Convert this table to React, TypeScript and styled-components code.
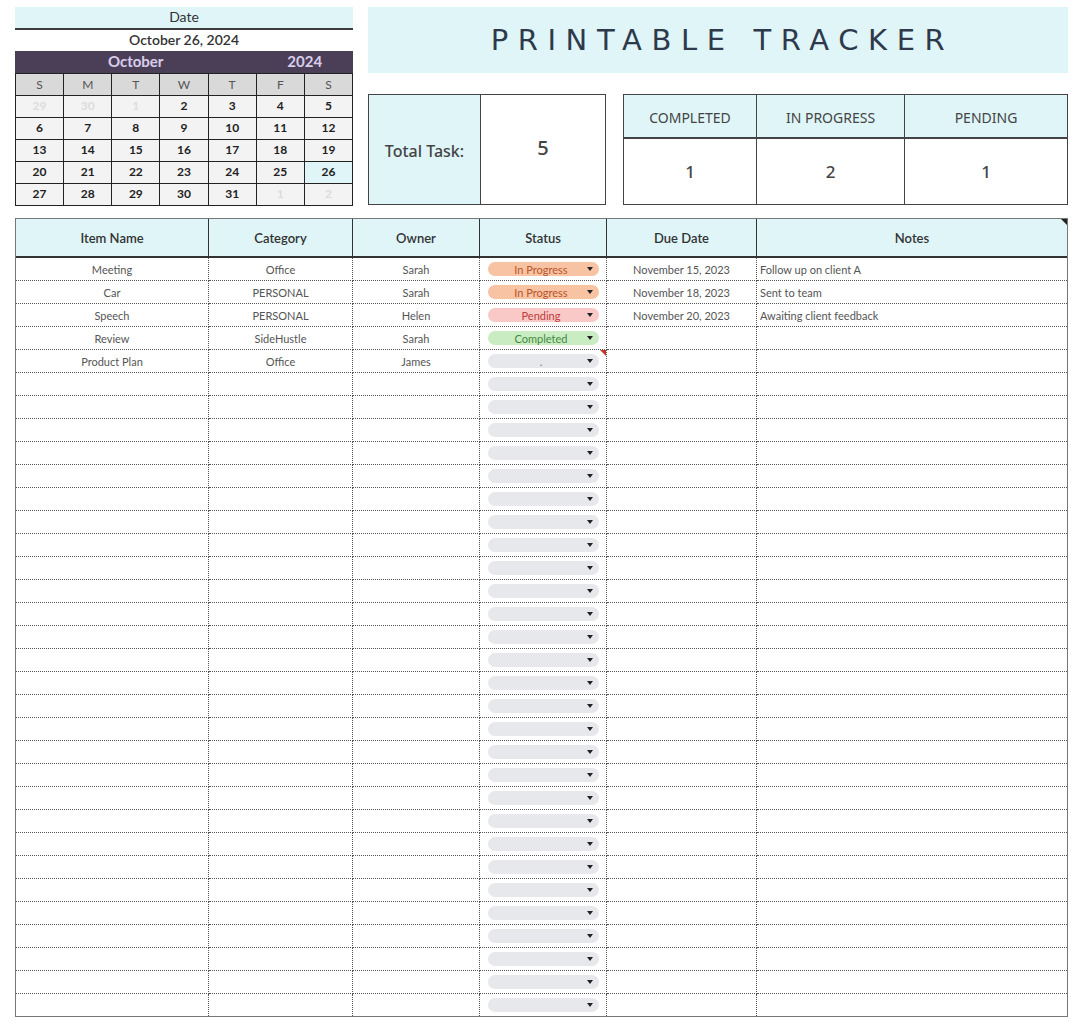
import React from "react";
import styled, { createGlobalStyle } from "styled-components";

const Global = createGlobalStyle`
  html, body { margin: 0; padding: 0; background: #fff; }
  body { font-family: "Lato", "Open Sans", sans-serif; color: #333; }
`;

const Page = styled.div`
  width: 1080px;
  padding: 7px 0 0 15px;
  box-sizing: border-box;
`;

const Top = styled.div`
  display: flex;
  gap: 15px;
  align-items: flex-start;
`;

const CalendarWrap = styled.div`
  width: 338px;
  display: flex;
  flex-direction: column;
`;

const DateBar = styled.div`
  height: 21px;
  background: #dff5f8;
  border-bottom: 2px solid #3c3c3c;
  text-align: center;
  font-size: 14px;
  line-height: 20px;
  color: #333;
`;

const DateValue = styled.div`
  height: 21px;
  text-align: center;
  font-size: 14px;
  line-height: 20px;
  font-weight: 600;
  color: #333;
`;

const MonthBar = styled.div`
  display: grid;
  grid-template-columns: 5fr 2fr;
  height: 22px;
  background: #4b3f57;
  color: #d9cdeb;
  font-weight: 700;
  font-size: 15px;
  line-height: 21px;
  text-align: center;
`;

const CalGrid = styled.div`
  display: grid;
  grid-template-columns: repeat(7, 1fr);
  border-left: 1px solid #222;
  border-top: 1px solid #222;
`;

const DayHead = styled.div`
  height: 21px;
  background: #d9d9d9;
  border-right: 1px solid #222;
  border-bottom: 1px solid #222;
  font-size: 12px;
  color: #555;
  text-align: center;
  line-height: 21px;
`;

const DayCell = styled.div<{ $faded?: boolean; $today?: boolean }>`
  height: 21px;
  background: ${(p) => (p.$today ? "#dff5f8" : "#f3f3f3")};
  border-right: 1px solid #222;
  border-bottom: 1px solid #222;
  font-size: 12px;
  font-weight: 700;
  color: ${(p) => (p.$faded ? "#dcdcdc" : "#222")};
  text-align: center;
  line-height: 20px;
`;

const RightCol = styled.div`
  width: 700px;
  display: flex;
  flex-direction: column;
  gap: 21px;
`;

const TitleBox = styled.div`
  height: 66px;
  background: #dff5f8;
  display: flex;
  align-items: center;
  justify-content: center;
  font-family: "DejaVu Sans", sans-serif;
  font-size: 29px;
  letter-spacing: 9.6px;
  color: #2e3a4b;
  padding-left: 9px;
`;

const SummaryRow = styled.div`
  display: flex;
  gap: 17px;
`;

const TotalBox = styled.div`
  width: 238px;
  height: 111px;
  display: grid;
  grid-template-columns: 112px 1fr;
  border: 1px solid #444;
  box-sizing: border-box;
`;

const TotalLabel = styled.div`
  background: #dff5f8;
  border-right: 1px solid #444;
  display: flex;
  align-items: center;
  justify-content: center;
  font-family: "Noto Sans", "DejaVu Sans", sans-serif;
  font-weight: 500;
  font-size: 16px;
  color: #444;
  padding-top: 2px;
`;

const TotalValue = styled.div`
  display: flex;
  align-items: center;
  justify-content: center;
  font-family: "Noto Sans", "DejaVu Sans", sans-serif;
  font-weight: 500;
  font-size: 20px;
  color: #444;
  padding-bottom: 4px;
`;

const StatusBox = styled.div`
  width: 445px;
  height: 111px;
  display: grid;
  grid-template-columns: 133px 148px 1fr;
  grid-template-rows: 44px 1fr;
  border: 1px solid #444;
  box-sizing: border-box;
`;

const StatHead = styled.div<{ $last?: boolean }>`
  background: #dff5f8;
  border-right: ${(p) => (p.$last ? "none" : "1px solid #444")};
  border-bottom: 2px solid #444;
  display: flex;
  align-items: center;
  justify-content: center;
  padding-top: 2px;
  font-family: "Noto Sans", "DejaVu Sans", sans-serif;
  font-size: 14px;
  color: #444;
`;

const StatValue = styled.div<{ $last?: boolean }>`
  border-right: ${(p) => (p.$last ? "none" : "1px solid #444")};
  display: flex;
  align-items: center;
  justify-content: center;
  font-family: "Noto Sans", "DejaVu Sans", sans-serif;
  font-weight: 500;
  font-size: 17px;
  color: #444;
`;

const Table = styled.div`
  position: relative;
  margin-top: 12px;
  width: 1053px;
  display: grid;
  grid-template-columns: 193px 144px 127px 127px 150px 1fr;
  border: 1px solid #777;
  box-sizing: border-box;
`;

const HeadCell = styled.div<{ $last?: boolean }>`
  position: relative;
  height: 37px;
  background: #dff5f8;
  border-right: ${(p) => (p.$last ? "none" : "1px solid #333")};
  border-bottom: 2px solid #333;
  display: flex;
  align-items: center;
  justify-content: center;
  font-size: 13px;
  font-weight: 600;
  color: #333;
`;

const Cell = styled.div<{ $last?: boolean; $align?: string; $lastRow?: boolean }>`
  position: relative;
  height: 22px;
  border-right: ${(p) => (p.$last ? "none" : "1px dotted #555")};
  border-bottom: ${(p) => (p.$lastRow ? "none" : "1px dotted #555")};
  display: flex;
  align-items: center;
  justify-content: ${(p) => p.$align || "center"};
  padding: 0 3px;
  font-size: 11px;
  color: #555;
  white-space: nowrap;
  box-sizing: content-box;
`;

const pillColors: Record<string, { bg: string; fg: string }> = {
  "In Progress": { bg: "#f8c3a2", fg: "#b8552d" },
  Pending: { bg: "#f9c9c7", fg: "#c03b3b" },
  Completed: { bg: "#c9ecc3", fg: "#3f8a3c" },
  "": { bg: "#e7e8eb", fg: "#777" },
};

const Pill = styled.div<{ $bg: string; $fg: string }>`
  width: 111px;
  height: 14px;
  border-radius: 7px;
  background: ${(p) => p.$bg};
  color: ${(p) => p.$fg};
  display: flex;
  align-items: center;
  box-sizing: border-box;
  padding: 0 6px 0 0;
  font-size: 11px;
`;

const PillText = styled.span`
  flex: 1;
  text-align: center;
  padding-left: 8px;
`;

const Arrow = styled.span`
  width: 0;
  height: 0;
  border-left: 3.5px solid transparent;
  border-right: 3.5px solid transparent;
  border-top: 4px solid #222;
`;

const CornerMark = styled.span<{ $color: string }>`
  position: absolute;
  top: 0;
  right: 0;
  width: 0;
  height: 0;
  border-left: 6px solid transparent;
  border-top: 6px solid ${(p) => p.$color};
`;

type Row = {
  item: string;
  cat: string;
  owner: string;
  status: string;
  due: string;
  notes: string;
  dot?: boolean;
};

const rows: Row[] = [
  { item: "Meeting", cat: "Office", owner: "Sarah", status: "In Progress", due: "November 15, 2023", notes: "Follow up on client A" },
  { item: "Car", cat: "PERSONAL", owner: "Sarah", status: "In Progress", due: "November 18, 2023", notes: "Sent to team" },
  { item: "Speech", cat: "PERSONAL", owner: "Helen", status: "Pending", due: "November 20, 2023", notes: "Awaiting client feedback" },
  { item: "Review", cat: "SideHustle", owner: "Sarah", status: "Completed", due: "", notes: "" },
  { item: "Product Plan", cat: "Office", owner: "James", status: "", due: "", notes: "", dot: true },
];
while (rows.length < 33) rows.push({ item: "", cat: "", owner: "", status: "", due: "", notes: "" });

const weeks: { d: number; faded?: boolean }[][] = [
  [{ d: 29, faded: true }, { d: 30, faded: true }, { d: 1, faded: true }, { d: 2 }, { d: 3 }, { d: 4 }, { d: 5 }],
  [6, 7, 8, 9, 10, 11, 12].map((d) => ({ d })),
  [13, 14, 15, 16, 17, 18, 19].map((d) => ({ d })),
  [20, 21, 22, 23, 24, 25, 26].map((d) => ({ d })),
  [{ d: 27 }, { d: 28 }, { d: 29 }, { d: 30 }, { d: 31 }, { d: 1, faded: true }, { d: 2, faded: true }],
];

export default function App() {
  return (
    <Page>
      <Global />
      <Top>
        <CalendarWrap>
          <DateBar>Date</DateBar>
          <DateValue>October 26, 2024</DateValue>
          <MonthBar>
            <span>October</span>
            <span>2024</span>
          </MonthBar>
          <CalGrid>
            {["S", "M", "T", "W", "T", "F", "S"].map((d, i) => (
              <DayHead key={i}>{d}</DayHead>
            ))}
            {weeks.flat().map((c, i) => (
              <DayCell key={i} $faded={c.faded} $today={i === 27}>
                {c.d}
              </DayCell>
            ))}
          </CalGrid>
        </CalendarWrap>
        <RightCol>
          <TitleBox>PRINTABLE TRACKER</TitleBox>
          <SummaryRow>
            <TotalBox>
              <TotalLabel>Total Task:</TotalLabel>
              <TotalValue>5</TotalValue>
            </TotalBox>
            <StatusBox>
              <StatHead>COMPLETED</StatHead>
              <StatHead>IN PROGRESS</StatHead>
              <StatHead $last>PENDING</StatHead>
              <StatValue>1</StatValue>
              <StatValue>2</StatValue>
              <StatValue $last>1</StatValue>
            </StatusBox>
          </SummaryRow>
        </RightCol>
      </Top>
      <Table>
        {["Item Name", "Category", "Owner", "Status", "Due Date", "Notes"].map((h, i) => (
          <HeadCell key={h} $last={i === 5}>
            {h}
            {i === 5 && <CornerMark $color="#222" />}
          </HeadCell>
        ))}
        {rows.map((r, i) => {
          const last = i === rows.length - 1;
          const c = pillColors[r.status];
          return (
            <React.Fragment key={i}>
              <Cell $lastRow={last}>{r.item}</Cell>
              <Cell $lastRow={last}>{r.cat}</Cell>
              <Cell $lastRow={last}>{r.owner}</Cell>
              <Cell $lastRow={last}>
                <Pill $bg={c.bg} $fg={c.fg}>
                  <PillText>{r.status || (r.dot ? "." : "")}</PillText>
                  <Arrow />
                </Pill>
                {r.dot && <CornerMark $color="#c0392b" />}
              </Cell>
              <Cell $lastRow={last}>{r.due}</Cell>
              <Cell $lastRow={last} $last $align="flex-start">
                {r.notes}
              </Cell>
            </React.Fragment>
          );
        })}
      </Table>
    </Page>
  );
}
